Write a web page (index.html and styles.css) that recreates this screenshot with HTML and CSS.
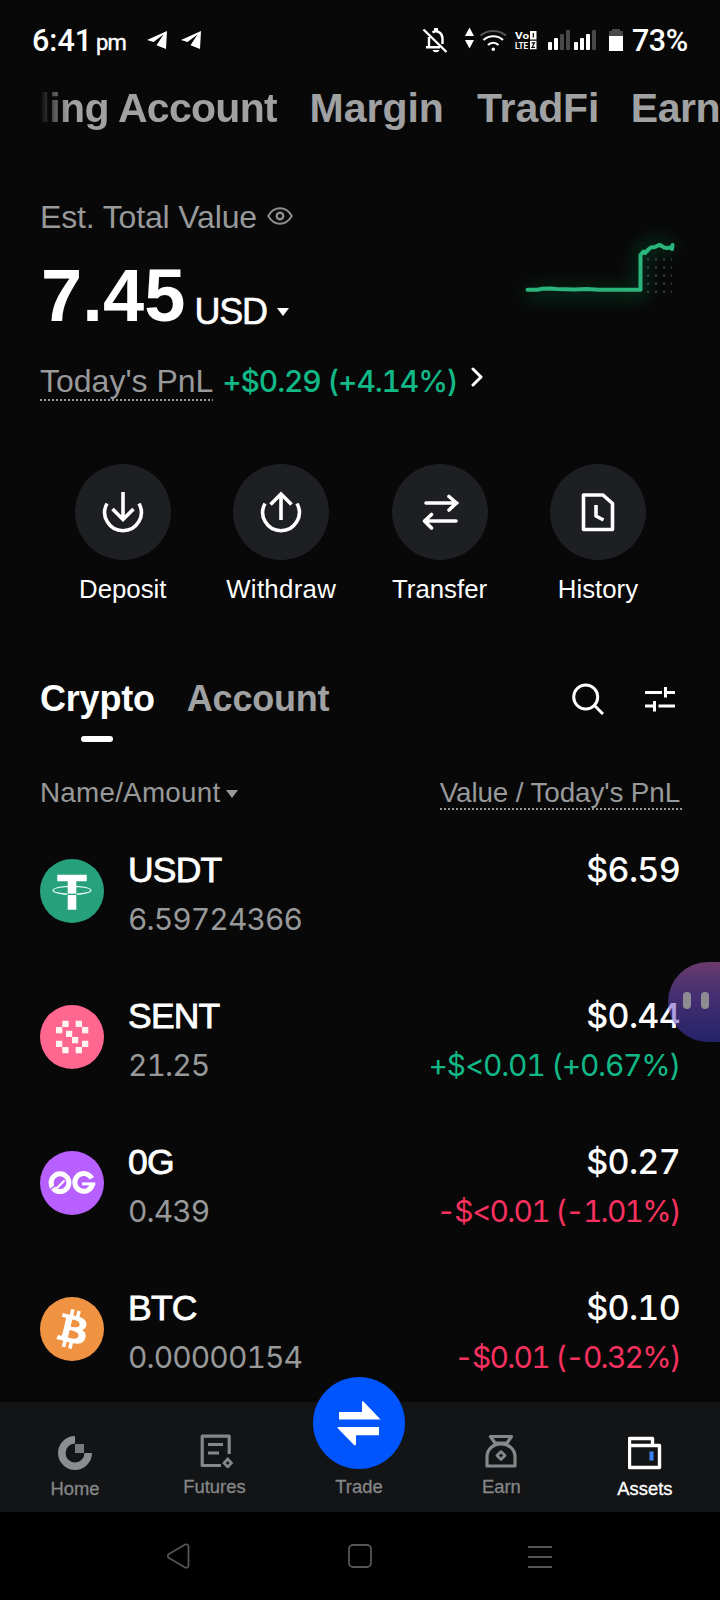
FILE: index.html
```html
<!DOCTYPE html>
<html lang="en">
<head>
<meta charset="utf-8">
<title>Assets</title>
<link rel="stylesheet" href="styles.css">
</head>
<body>
<div class="screen">
  <header class="status">
    <span class="clock">6:41</span><span class="ampm">pm</span>
    <svg class="tg" width="20" height="18" viewBox="0 0 20 18"><path d="M0 9 20 0 19 18 9.500 14.200 16.500 3.600 6.500 10.900Z" fill="#fff"/></svg>
    <svg class="tg" width="20" height="18" viewBox="0 0 20 18"><path d="M0 9 20 0 19 18 9.500 14.200 16.500 3.600 6.500 10.900Z" fill="#fff"/></svg>
    <svg class="sys" width="214" height="32" viewBox="416 24 214 32">
      <g fill="none" stroke="#fff" stroke-width="2.4">
        <path d="M423.5 29.5 446.5 52"/>
        <path d="M429 37v10M426 47.300h14M432.500 32.500C437 29.500 442.500 33 442.500 38.500V44"/>
      </g>
      <path d="M434 28h4v4h-4zM432.5 50h7c-1 3-6 3-7 0Z" fill="#fff"/>
      <path d="M469.500 27.500 474 36h-9zM469.500 48.500 474 40h-9z" fill="#fff"/>
      <g fill="none" stroke="#fff" stroke-width="2.2">
        <path d="M480.5 35.5c7.5-6 18-6 25.5 0" stroke="#555"/>
        <path d="M483.5 40c5.5-5 14-5 19.5 0M488 45c3-3 7.5-3 10.5 0"/>
      </g>
      <circle cx="493.3" cy="49.2" r="1.7" fill="#fff"/>
      <text x="515" y="38.800" class="volte" textLength="14" lengthAdjust="spacingAndGlyphs">Vo</text>
      <text x="515" y="49.300" class="volte" textLength="13" lengthAdjust="spacingAndGlyphs">LTE</text>
      <path d="M530 31h6.500v8.500H530zM530 40.800h6.500v8.500H530z" fill="#fff"/>
      <path d="M533.300 33v4.500M531.500 42.800h3l-2.500 4.500h3" fill="none" stroke="#080808" stroke-width="1.2"/>
      <g fill="#fff"><rect x="548" y="42" width="4" height="8" rx="1"/><rect x="554" y="38" width="4" height="12" rx="1"/><rect x="574" y="42" width="4" height="8" rx="1"/><rect x="580" y="38" width="4" height="12" rx="1"/><rect x="586" y="34" width="4" height="16" rx="1"/></g>
      <g fill="#484848"><rect x="560" y="34" width="4" height="16" rx="1"/><rect x="566" y="30" width="4" height="20" rx="1"/><rect x="592" y="30" width="4" height="20" rx="1"/></g>
      <path d="M609 31h3v-2h8v2h3v6h-14z" fill="#484848"/><path d="M609 36h14v15h-14z" fill="#fff"/>
    </svg>
    <span class="battery">73%</span>
  </header>

  <nav class="toptabs">
    <span class="cut"><span>Trading Account</span></span>
    <span class="t-margin">Margin</span>
    <span class="t-tradfi">TradFi</span>
    <span class="t-earn">Earn</span>
  </nav>

  <section class="overview">
    <div class="figures">
      <div class="label">Est. Total Value
        <svg width="26" height="18" viewBox="0 0 26 18" fill="none" stroke="#8b8b8c" stroke-width="2"><path d="M1.300 9C7-1.200 19-1.200 24.700 9 19 19.200 7 19.200 1.300 9Z"/><circle cx="13" cy="9" r="3.3" stroke-width="2.4"/></svg>
      </div>
      <div class="total"><b>7.45</b><span>USD</span><svg width="12" height="8" viewBox="0 0 12 8"><path d="M0 0h12L6 8z" fill="#fff"/></svg></div>
      <div class="pnl"><span class="dotted">Today's PnL</span><span class="gain">+$0.29 (+4.14%)</span><svg width="12" height="20" viewBox="0 0 12 20"><path d="M2 2l8 8-8 8" fill="none" stroke="#fff" stroke-width="3" stroke-linecap="round" stroke-linejoin="round"/></svg></div>
    </div>
    <svg class="spark" width="200" height="120" viewBox="500 210 200 120">
      <defs>
        <filter id="glow" x="-30%" y="-60%" width="160%" height="220%"><feGaussianBlur stdDeviation="9"/></filter>
        <pattern id="dots" x="645" y="256" width="8" height="8.15" patternUnits="userSpaceOnUse"><path d="M1.500 4 3 1.500 4.500 4z" fill="#3c5247"/></pattern>
      </defs>
      <path d="M527 293H641V252L650 246H673" fill="none" stroke="#0a7a45" stroke-width="9" opacity=".45" filter="url(#glow)"/>
      <path d="M643 252h29v41h-29z" fill="url(#dots)"/>
      <path d="M527.500 289.700h10l5-.9 8-.3 6 .6 18 .3 12-.3 12 .6h42V255L643.500 251.500 645 253 649 249 651 247.500 655 247 659 245 662 246 664 247.500 667 248 670 247.500 672 249 672.500 245" fill="none" stroke="#2ab57c" stroke-width="4" stroke-linecap="round" stroke-linejoin="round"/>
    </svg>
  </section>

  <section class="actions">
    <div class="action"><svg width="96" height="96" viewBox="0 0 96 96"><circle cx="48" cy="48" r="48" class="disc"/><path d="M32 39.500A18.300 18.300 0 1 0 64 39.500M48 28v26M37.500 45 48 55.500 58.500 45"/></svg><span>Deposit</span></div>
    <div class="action"><svg width="96" height="96" viewBox="0 0 96 96"><circle cx="48" cy="48" r="48" class="disc"/><path d="M32 39.500A18.300 18.300 0 1 0 64 39.500M48 56V30M37.500 40.500 48 30 58.500 40.500"/></svg><span class="wide">Withdraw</span></div>
    <div class="action"><svg width="96" height="96" viewBox="0 0 96 96"><circle cx="48" cy="48" r="48" class="disc"/><path stroke-linecap="round" stroke-linejoin="round" d="M34 39H65M57 32.500 64.500 39 57 46M64 57H33M39.500 50.500 32.500 57 39.500 64"/></svg><span>Transfer</span></div>
    <div class="action"><svg width="96" height="96" viewBox="0 0 96 96"><circle cx="48" cy="48" r="48" class="disc"/><path stroke-linejoin="round" d="M33.500 31H53L62.500 39.500V65.500H33.500ZM46 41V52L53.500 56"/></svg><span>History</span></div>
  </section>

  <section class="listtabs">
    <div class="lt active">Crypto<i></i></div>
    <div class="lt">Account</div>
    <svg class="find" width="32" height="32" viewBox="0 0 32 32" fill="none" stroke="#fff" stroke-width="3"><circle cx="13.7" cy="14" r="12"/><path d="M22.500 22.500 31 31"/></svg>
    <svg class="tune" width="30" height="26" viewBox="0 0 30 26" stroke="#fff" stroke-width="3"><path d="M0 6.500h17M20.500 1v10.500M20.500 6.500H30M0 20h9M9.500 15v10.500M13.500 20H30"/></svg>
  </section>

  <section class="colhead">
    <span class="sort">Name/Amount <svg width="12" height="8" viewBox="0 0 12 8"><path d="M0 0h12L6 8z" fill="#98999a"/></svg></span>
    <span class="dotted hd">Value / Today's PnL</span>
  </section>

  <main class="coins">
    <article class="coin">
      <svg width="64" height="64" viewBox="0 0 64 64"><circle cx="32" cy="32" r="32" fill="#26a17b"/><ellipse cx="32" cy="31.3" rx="19" ry="4" fill="none" stroke="#e8fff6" stroke-width="1.2"/><path d="M17.300 15.700h29.400v6.600H36.300v28.400h-8.600V22.300H17.300z" fill="#fff"/><path d="M27 35.200q5 .4 10 0" stroke="#26a17b" stroke-width="1.2" fill="none"/></svg>
      <div class="name"><b>USDT</b><span>6.59724366</span></div>
      <div class="val"><b>$6.59</b></div>
    </article>
    <article class="coin">
      <svg width="64" height="64" viewBox="0 0 64 64"><circle cx="32" cy="32" r="32" fill="#ff6790"/><path fill="#fff5f2" d="M22.300 15.700h6.300v6.300h-6.300zM16 22h6.300v6.300H16zM35.700 15.700H42V22h-6.300zM42 22h6.300v6.300H42zM26 25.700h6.200V32H26zM32 32h6.200v6.300H32zM16 35.700h6.300V42H16zM22.300 42h6.300v6.300h-6.300zM42 35.700h6.300V42H42zM35.700 42H42v6.300h-6.300z"/></svg>
      <div class="name"><b>SENT</b><span>21.25</span></div>
      <div class="val"><b>$0.44</b><span class="up">+$&lt;0.01 (+0.67%)</span></div>
    </article>
    <article class="coin">
      <svg width="64" height="64" viewBox="0 0 64 64" fill="none"><circle cx="32" cy="32" r="32" fill="#b75fff"/><g stroke="#fff" stroke-width="5"><circle cx="20" cy="31.7" r="8.9"/><path d="M51.700 27.400A8.900 8.900 0 1 0 52.500 33"/><path d="M42 32.800H55.300" stroke-width="3.2"/></g><path d="M10.500 38.500 22 28.500" stroke="#b75fff" stroke-width="1.5"/><path d="M13.500 40.500 24.500 29.500" stroke="#fff" stroke-width="2.2"/><path d="M42 30.800H55" stroke="#b75fff"/></svg>
      <div class="name"><b>0G</b><span>0.439</span></div>
      <div class="val"><b>$0.27</b><span class="down">-$&lt;0.01 (-1.01%)</span></div>
    </article>
    <article class="coin">
      <svg width="64" height="64" viewBox="0 0 32 32"><circle cx="16" cy="16" r="16" fill="#ef9242"/><path fill="#fff" d="M23.189 14.020c.314-2.096-1.283-3.223-3.465-3.975l.708-2.840-1.728-.430-.690 2.765c-.454-.114-.920-.220-1.385-.326l.695-2.783L15.596 6l-.708 2.839c-.376-.086-.746-.170-1.104-.260l.002-.009-2.384-.595-.460 1.846s1.283.294 1.256.312c.700.175.826.638.805 1.006l-.806 3.235c.048.012.110.030.180.057l-.183-.045-1.130 4.532c-.086.212-.303.531-.793.410.018.025-1.256-.313-1.256-.313l-.858 1.978 2.250.561c.418.105.828.215 1.231.318l-.715 2.872 1.727.430.708-2.840c.472.127.930.245 1.378.357l-.706 2.828 1.728.430.715-2.866c2.948.558 5.164.333 6.097-2.333.752-2.146-.037-3.385-1.588-4.192 1.130-.260 1.980-1.003 2.207-2.538zm-3.950 5.538c-.533 2.147-4.148.986-5.320.695l.950-3.805c1.172.293 4.929.872 4.370 3.110zm.535-5.569c-.487 1.953-3.495.960-4.470.717l.860-3.450c.975.243 4.118.696 3.610 2.733z"/></svg>
      <div class="name"><b>BTC</b><span>0.00000154</span></div>
      <div class="val"><b>$0.10</b><span class="down">-$0.01 (-0.32%)</span></div>
    </article>
  </main>

  <nav class="bottom">
    <div class="tab low"><svg width="34" height="34" viewBox="0 0 34 34"><path d="M17 3.800A13.200 13.200 0 1 0 30.200 17" fill="none" stroke="#8b8d8e" stroke-width="7.5"/><path d="M17 8h9v9h-9z" fill="#77797a"/></svg><span>Home</span></div>
    <div class="tab fut"><svg width="34" height="34" viewBox="0 0 34 34" fill="none" stroke="#858788" stroke-width="3.2"><path d="M21 31.500H2.200V2.200H29.200V20M8 10.500H23M8 19H19" stroke-linejoin="round"/><path d="M27.700 25 31.500 29 27.700 33 24 29z" stroke-width="2.6"/></svg><span>Futures</span></div>
    <div class="tab mid"><svg class="orb" width="92" height="92" viewBox="0 0 92 92"><circle cx="46" cy="46" r="46" fill="#0055ff"/><path fill="#fff" d="M26 35H49V24.500Q50 24 51 25L67.500 42.500H26ZM66 50V58.300H43V67.500Q42 69 41 68L24.500 51Q24.500 50 25.500 50Z"/></svg><span>Trade</span></div>
    <div class="tab earn"><svg width="34" height="34" viewBox="0 0 34 34" fill="none" stroke="#858788" stroke-width="3.2" stroke-linejoin="round"><path d="M6.500 2.500H27.500L23 9H11ZM3 32H31V23C31 5.500 3 5.500 3 23Z"/><path d="M17 17.500 21 21.500 17 25.500 13 21.500z" stroke-width="2.8"/></svg><span>Earn</span></div>
    <div class="tab low on"><svg width="34" height="34" viewBox="0 0 34 34" fill="none" stroke="#fff" stroke-width="3.4" stroke-linejoin="round"><path d="M1.500 9.500V2.500H24.500V9.500M1.500 9.500H31.500V31.500H1.500Z"/><path d="M23.500 15.500V24.500" stroke="#3b82f6" stroke-width="4"/></svg><span>Assets</span></div>
  </nav>

  <footer class="sysnav">
    <svg width="24" height="28" viewBox="0 0 24 28"><path d="M19 2.500 3 12Q.5 14 3 16L19 25.500Q22.500 26.500 22.500 23V5Q22.500 1.500 19 2.500Z"/></svg>
    <svg class="sq" width="24" height="24" viewBox="0 0 24 24"><rect x="1" y="1" width="22" height="22" rx="4"/></svg>
    <svg width="24" height="24" viewBox="0 0 24 24"><path d="M0 3h24M0 13h24M0 23h24"/></svg>
  </footer>

  <div class="bubble"><i></i><i></i></div>
</div>
</body>
</html>
```
FILE: styles.css
```css
* { box-sizing: border-box; }
body { margin: 0; background: #080808; color: #fff; font-family: "Liberation Sans", Arial, sans-serif; }
b { font-weight: 400; }
svg { display: block; flex: none; }
.screen { position: relative; width: 720px; height: 1600px; overflow: hidden; background: #080808; white-space: nowrap; }

.status { display: flex; align-items: center; height: 80px; padding: 0 30px 0 32px; font-family: Roboto, sans-serif; font-weight: 500; }
.clock { font-size: 30.5px; line-height: 40px; width: 64px; padding-top: 1px; }
.ampm { font-size: 22px; line-height: 40px; width: 51px; padding-top: 5px; font-weight: 400; -webkit-text-stroke: .4px #fff; letter-spacing: -.8px; }
.tg { margin-right: 14px; }
.sys { margin-left: auto; }
.battery { font-size: 30.5px; line-height: 40px; width: 60px; padding: 1px 0 0 2px; letter-spacing: -.5px; }
.volte { font: 700 9.8px Roboto, sans-serif; fill: #fff; }

.toptabs { display: flex; height: 56px; line-height: 57px; padding-left: 40px; font-size: 41px; font-weight: 700; color: #a0a1a2; }
.toptabs > span { flex: none; }
.cut { display: flex; justify-content: flex-end; width: 237px; letter-spacing: -.7px; overflow: hidden; -webkit-mask-image: linear-gradient(90deg, transparent, #000 28px); mask-image: linear-gradient(90deg, transparent, #000 28px); }
.t-margin { margin-left: 32.5px; letter-spacing: 0; }
.t-tradfi { margin-left: 33px; letter-spacing: -.1px; }
.t-earn { margin-left: 31.5px; letter-spacing: -.5px; }

.overview { display: flex; justify-content: space-between; padding: 61px 20px 0 40px; height: 328px; }
.label { display: flex; gap: 10px; align-items: center; line-height: 41px; height: 40px; font-size: 32px; letter-spacing: -.15px; color: #98999a; }
.label svg { margin-top: -3px; }
.total { display: flex; align-items: baseline; height: 84px; line-height: 84px; margin-top: 15px; }
.total b { font-size: 74px; font-weight: 700; letter-spacing: .1px; position: relative; top: 2px; left: 1px; }
.total span { font-size: 36px; letter-spacing: -1.2px; margin-left: 10px; position: relative; top: 5px; -webkit-text-stroke: .6px #fff; }
.total svg { margin-left: 10px; position: relative; top: -3px; }
.pnl { display: flex; align-items: center; margin-top: 25.5px; font-size: 32px; line-height: 39px; }
.dotted { color: #98999a; background: repeating-linear-gradient(90deg, #98999a 0 2px, transparent 2px 4px) left bottom / 100% 2px no-repeat; }
.gain { margin-left: 9px; color: #12b886; font-family: Inter, sans-serif; font-size: 30px; font-weight: 500; font-feature-settings: "tnum"; letter-spacing: -1.15px; }
.pnl svg { margin: -9px 0 0 14px; }
.spark { margin-top: 13px; }

.actions { display: grid; grid-template-columns: repeat(4, 158.4px); padding-left: 43.6px; }
.action { display: flex; flex-direction: column; align-items: center; gap: 13px; font-size: 25.8px; line-height: 32px; }
.action .wide { letter-spacing: .3px; }
.action svg { fill: none; stroke: #fff; stroke-width: 3.6; }
.action .disc { fill: #1e1f22; stroke: none; }

.listtabs { display: flex; align-items: flex-start; padding: 70.5px 45px 0 40px; height: 171px; font-size: 36px; line-height: 45px; font-weight: 700; letter-spacing: -.2px; color: #a0a1a2; }
.lt { margin-right: 32px; }
.lt.active { color: #fff; display: flex; flex-direction: column; align-items: center; gap: 15.5px; }
.lt i { width: 32px; height: 6px; border-radius: 3px; background: #fff; }
.find { margin: 7px 0 0 auto; }
.tune { margin: 10px 0 0 41px; }

.colhead { display: flex; justify-content: space-between; align-items: flex-start; height: 42px; padding: 0 38px 0 40px; font-size: 27.8px; line-height: 34px; color: #98999a; }
.sort { display: flex; align-items: center; gap: 6px; letter-spacing: .25px; }
.sort svg { margin-top: 2px; }
.hd { letter-spacing: -.1px; padding-right: 2px; }

.coin { display: flex; height: 146px; padding: 0 40px; }
.coin > svg { margin: 41px 24px 0 0; }
.coin b, .coin span { display: block; }
.coin b { font-size: 35.5px; line-height: 48px; letter-spacing: -.8px; -webkit-text-stroke: .8px currentColor; }
.coin span { font-family: Inter, sans-serif; font-size: 30px; line-height: 50px; font-feature-settings: "tnum"; letter-spacing: -.9px; }
.name { padding-top: 28px; }
.name span { color: #98999a; }
.val { margin-left: auto; padding-top: 27.5px; text-align: right; }
.coin .val b { font-family: Inter, sans-serif; font-size: 34px; font-weight: 500; letter-spacing: -.7px; font-feature-settings: "tnum"; -webkit-text-stroke: 0; }
.coin .val span { padding-top: .5px; }
.coin .up { color: #12b886; letter-spacing: -1.25px; }
.coin .down { color: #f6315f; letter-spacing: -1.75px; }

.bottom { display: grid; grid-template-columns: repeat(5, 142.5px); height: 110px; padding: 0 3.7px; background: #131416; }
.tab { display: flex; flex-direction: column; align-items: center; padding-top: 32px; gap: 7px; font-size: 18.4px; line-height: 24px; color: #858788; -webkit-text-stroke: .3px currentColor; }
.tab svg { -webkit-text-stroke: 0; }
.tab.low { padding-top: 34px; }
.tab.on { color: #fff; }
.tab.fut span { margin-left: -6px; }
.tab.mid { padding: 0 2px 0 0; gap: 6px; }
.tab.earn { padding-right: 2px; }
.orb { margin-top: -25px; }

.sysnav { display: flex; align-items: center; height: 88px; padding: 0 168px 0 166px; justify-content: space-between; background: #000; }
.sysnav svg { fill: none; stroke: #555; stroke-width: 1.8; }
.sysnav .sq { margin-left: 2px; }

/* Floating assistant, lies over the list's right edge */
.bubble { position: absolute; right: 0; top: 962px; width: 52px; height: 80px; border-radius: 40px 0 0 40px; display: flex; gap: 10px; padding: 30px 0 0 15px; background: linear-gradient(rgba(188,99,190,.55), rgba(120,80,200,.55) 40%, rgba(66,60,200,.5)); }
.bubble i { width: 8px; height: 17px; border-radius: 4px; background: #8f8b92; }
```
